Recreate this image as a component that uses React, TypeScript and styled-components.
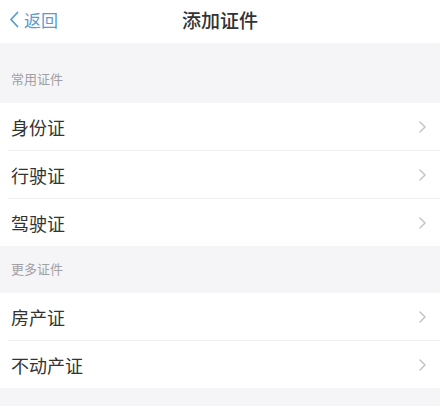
import styled, { createGlobalStyle } from "styled-components";

const GlobalStyle = createGlobalStyle`
  body {
    margin: 0;
    background: #f5f5f7;
    font-family: "Noto Sans CJK SC", "Noto Sans", sans-serif;
  }
`;

const sections = [
  { title: "常用证件", items: ["身份证", "行驶证", "驾驶证"], top: 60 },
  { title: "更多证件", items: ["房产证", "不动产证"], top: 47 },
];

export default function App() {
  return (
    <Page>
      <GlobalStyle />
      <NavBar>
        <BackButton>
          <svg width="10" height="17" viewBox="0 0 10 17">
            <path
              d="M8.5 1.5 L2 8.5 L8.5 15.5"
              fill="none"
              stroke="#5b9bd0"
              strokeWidth="1.8"
              strokeLinecap="round"
              strokeLinejoin="round"
            />
          </svg>
          <span>返回</span>
        </BackButton>
        <Title>添加证件</Title>
      </NavBar>
      {sections.map((section) => (
        <div key={section.title}>
          <SectionHeader $height={section.top}>{section.title}</SectionHeader>
          <List>
            {section.items.map((item) => (
              <Row key={item}>
                <Label>{item}</Label>
                <svg width="7" height="12" viewBox="0 0 7 12">
                  <path
                    d="M1 1 L6 6 L1 11"
                    fill="none"
                    stroke="#c4c4c8"
                    strokeWidth="1.5"
                    strokeLinecap="round"
                    strokeLinejoin="round"
                  />
                </svg>
              </Row>
            ))}
          </List>
        </div>
      ))}
    </Page>
  );
}

const Page = styled.div`
  width: 440px;
  min-height: 406px;
  background: #f5f5f7;
`;

const NavBar = styled.div`
  position: relative;
  height: 43px;
  background: #ffffff;
  display: flex;
  align-items: center;
  justify-content: center;
`;

const BackButton = styled.div`
  position: absolute;
  left: 9px;
  top: 0;
  bottom: 0;
  display: flex;
  align-items: center;
  gap: 5px;
  color: #5b9bd0;
  font-size: 17px;
  padding-bottom: 4px;
`;

const Title = styled.div`
  font-size: 19px;
  font-weight: 500;
  color: #333333;
  padding-bottom: 4px;
`;

const SectionHeader = styled.div<{ $height: number }>`
  height: ${(p) => p.$height}px;
  box-sizing: border-box;
  display: flex;
  align-items: flex-end;
  padding: 0 0 15px 11px;
  font-size: 13px;
  color: #a0a0a5;
`;

const List = styled.div`
  background: #ffffff;
`;

const Row = styled.div`
  height: 47px;
  display: flex;
  align-items: center;
  justify-content: space-between;
  padding: 0 14px 0 11px;
  & + & {
    border-top: 1px solid #efeff2;
    margin-left: 8px;
    padding-left: 3px;
  }
`;

const Label = styled.span`
  font-size: 18px;
  color: #333333;
`;
